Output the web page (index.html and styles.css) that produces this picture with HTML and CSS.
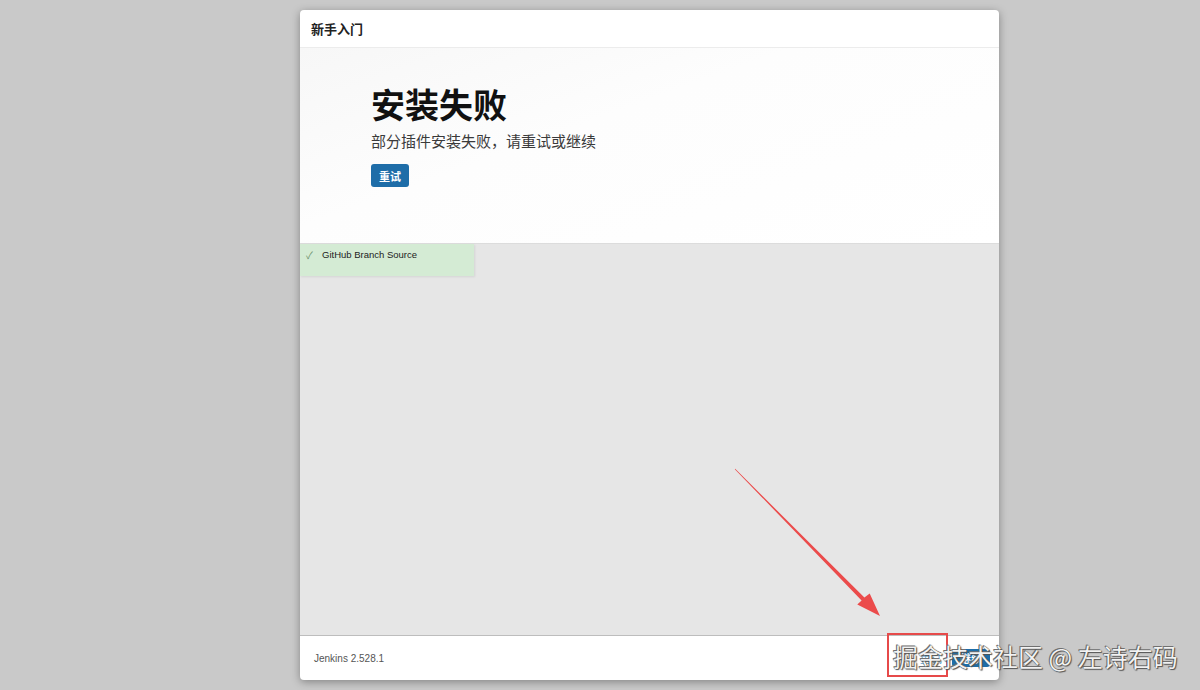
FILE: index.html
```html
<!DOCTYPE html>
<html lang="zh-CN">
<head>
    <meta charset="UTF-8">
    <title>新手入门</title>
    <link rel="stylesheet" href="styles.css">
</head>
<body>

    <div class="dialog">
        <div class="dialog-header">新手入门</div>

        <div class="hero">
            <h1>安装失败</h1>
            <p>部分插件安装失败，请重试或继续</p>
            <button class="btn-primary btn-small">重试</button>
        </div>

        <div class="plugins">
            <div class="plugin success">
                <span class="check">&#x2713;</span>
                <span>GitHub Branch Source</span>
            </div>
        </div>

        <div class="dialog-footer">
            <span class="version">Jenkins 2.528.1</span>
            <div class="actions">
                <button class="btn-link">重试</button>
                <button class="btn-primary">继续</button>
            </div>
        </div>
    </div>

    <!-- screenshot annotations -->
    <svg class="arrow" width="1200" height="690" viewBox="0 0 1200 690">
        <polygon fill="#eb4b4b" points="735.2,468.8 864.4,597.6 869.7,593.4 880,616 857.3,604.6 861.6,600.4 734.8,469.2"/>
    </svg>
    <div class="highlight"></div>
    <div class="watermark">掘金技术社区 @ 左诗右码</div>

</body>
</html>
```

FILE: styles.css
```css
body {
    margin: 0;
    height: 690px;
    overflow: hidden;
    background-color: #c9c9c9;
    font-family: "Liberation Sans", "Noto Sans CJK SC", sans-serif;
    color: #222;
}

.dialog {
    width: 699px;
    height: 670px;
    margin: 10px 0 0 300px;
    background-color: #fff;
    border-radius: 4px;
    box-shadow: 0 2px 8px rgba(0, 0, 0, 0.35);
    display: flex;
    flex-direction: column;
    overflow: hidden;
}

.dialog-header {
    height: 37px;
    padding-left: 11px;
    display: flex;
    align-items: center;
    font-size: 13px;
    font-weight: bold;
    color: #222;
    border-bottom: 1px solid #ececec;
}

.hero {
    height: 196px;
    box-sizing: border-box;
    padding: 39px 0 0 71px;
    background: linear-gradient(160deg, #f7f7f7 0%, #fdfdfd 40%, #ffffff 100%);
    border-bottom: 1px solid #dcdcdc;
}

.hero h1 {
    margin: 0;
    font-size: 34px;
    line-height: 38px;
    font-weight: bold;
    color: #111;
}

.hero p {
    margin: 7px 0 0;
    font-size: 15px;
    line-height: 20px;
    color: #3a3a3a;
}

.btn-primary {
    background-color: #1e6da8;
    color: #fff;
    border: 0;
    border-radius: 3px;
    font-family: inherit;
    font-size: 11px;
    font-weight: bold;
    padding: 0;
    width: 38px;
    height: 18px;
    cursor: pointer;
}

.btn-small {
    width: 38px;
    height: 23px;
    margin-top: 12px;
}

.plugins {
    flex: 1;
    background-color: #e6e6e6;
}

.plugin {
    width: 174px;
    height: 32px;
    box-sizing: border-box;
    padding-left: 6px;
    display: flex;
    align-items: center;
    gap: 8px;
    font-size: 9.5px;
    color: #222;
    padding-bottom: 11px;
}

.plugin.success {
    background-color: #d4ebd4;
    box-shadow: 1px 1px 2px rgba(0, 0, 0, 0.08);
}

.check {
    color: #6b8f6b;
    font-size: 10px;
    width: 8px;
}

.dialog-footer {
    height: 44px;
    border-top: 1px solid #bdbdbd;
    display: flex;
    align-items: center;
    justify-content: space-between;
    padding: 0 9px 0 14px;
}

.version {
    font-size: 10px;
    color: #555;
}

.actions {
    display: flex;
    align-items: center;
    gap: 10px;
}

.btn-link {
    background: none;
    border: 0;
    color: #5a9fd0;
    font-family: inherit;
    font-size: 11px;
    padding: 0;
}

.arrow {
    position: absolute;
    left: 0;
    top: 0;
    pointer-events: none;
}

.highlight {
    position: absolute;
    left: 887px;
    top: 633px;
    width: 57px;
    height: 40px;
    border: 2px solid #e64a4a;
}

.watermark {
    position: absolute;
    left: 893px;
    top: 640px;
    font-family: "Noto Sans CJK SC", sans-serif;
    font-size: 25px;
    line-height: 32px;
    color: #f2f2f2;
    white-space: nowrap;
    text-shadow: 0 0 1px #333, 1px 1px 1px #555, -1px -1px 0 #777;
}
```
